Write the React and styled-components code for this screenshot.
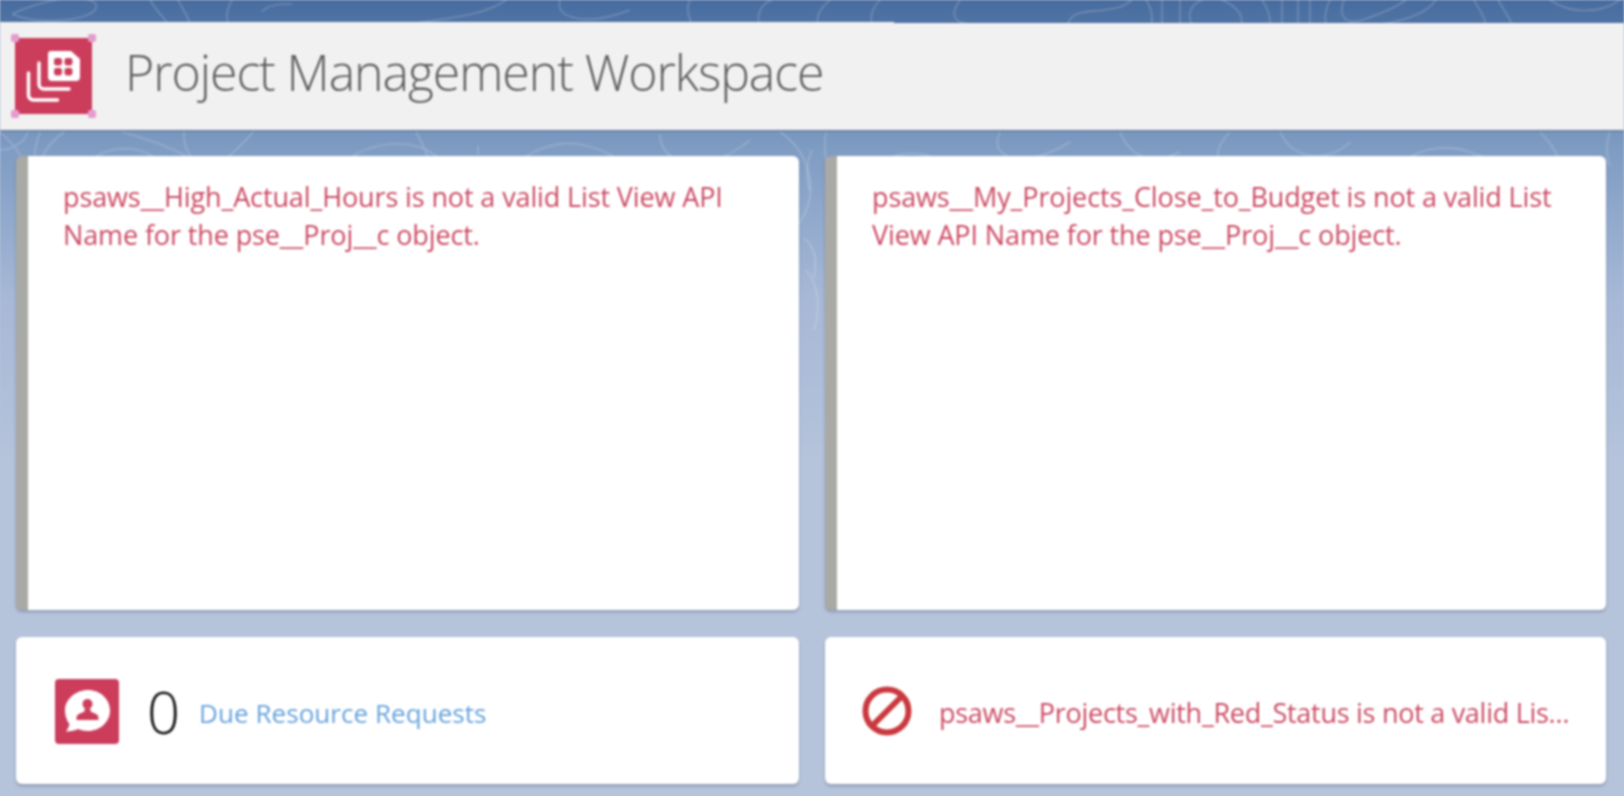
import React from "react";
import styled, { createGlobalStyle } from "styled-components";

const Global = createGlobalStyle`
  html, body { margin: 0; padding: 0; height: 100%; overflow: hidden; }
  body { font-family: "Open Sans", "Noto Sans", sans-serif; background: #b5c3db; }
`;

const Page = styled.div`
  position: relative;
  width: 1624px;
  height: 796px;
  overflow: hidden;
  filter: blur(0.9px);
  background: linear-gradient(180deg, #476c9f 0px, #7f9cc3 150px, #a7b9d7 300px, #b5c3db 460px, #b5c3db 796px);
`;

const Contours = styled.svg`
  position: absolute;
  left: 0;
  top: 0;
  width: 1624px;
  height: 360px;
  fill: none;
  stroke: rgba(255, 255, 255, 0.2);
  stroke-width: 1.6;
`;

const Content = styled.div`
  position: relative;
  display: flex;
  flex-direction: column;
  padding-top: 22px;
`;

const Header = styled.header`
  height: 107px;
  margin-top: 1px;
  background: #f1f1f1;
  box-shadow: 0 1px 2px rgba(60, 70, 90, 0.45);
`;

const HeaderInner = styled.div`
  width: 894px;
  height: 108px;
  margin-top: -1px;
  padding-left: 15px;
  box-sizing: border-box;
  display: flex;
  align-items: center;
  gap: 33px;
  background: #f1f1f1;
`;

const LogoBox = styled.div`
  position: relative;
  width: 77px;
  height: 76px;
  border-radius: 5px;
  background: #cc3d5c;
`;

const Handle = styled.span`
  position: absolute;
  width: 8px;
  height: 8px;
  border-radius: 2px;
  background: #e59cce;
  ${(p) => (p.$top ? "top: -4px;" : "bottom: -4px;")}
  ${(p) => (p.$left ? "left: -4px;" : "right: -4px;")}
`;

const Glyph = styled.svg`
  position: relative;
  display: block;
`;

const Title = styled.h1`
  margin: 0 0 8px;
  font-size: 50px;
  font-weight: 300;
  line-height: 1;
  letter-spacing: -1.08px;
  color: #5e5e5e;
`;

const Grid = styled.main`
  display: grid;
  grid-template-columns: 783px 781px;
  grid-template-rows: 454px 147px;
  column-gap: 26px;
  row-gap: 27px;
  padding: 26px 18px 0 16px;
`;

const Card = styled.section`
  box-sizing: border-box;
  background: #fff;
  border-radius: 6px;
  box-shadow: 0 2px 3px rgba(70, 80, 100, 0.35);
  overflow: hidden;
`;

const ListCard = styled(Card)`
  border-left: 12px solid #a9a9a6;
  padding: 22px 30px 0 35px;
`;

const MetricCard = styled(Card)`
  display: flex;
  align-items: center;
  padding-left: ${(p) => p.$pad}px;
  padding-right: 36px;
`;

const ErrorText = styled.p`
  margin: 0;
  font-size: 27px;
  line-height: 38px;
  letter-spacing: -0.12px;
  color: #cc4a63;
`;

const TileIcon = styled.div`
  flex: none;
  width: 64px;
  height: 65px;
  margin-top: 1px;
  border-radius: 4px;
  background: #cc3d5c;
  display: flex;
  align-items: center;
  justify-content: center;
`;

const Count = styled.span`
  margin: 3px 0 0 28px;
  font-size: 58px;
  font-weight: 300;
  line-height: 1;
  color: #111;
`;

const MetricLink = styled.a`
  margin: 4px 0 0 19px;
  font-size: 26px;
  letter-spacing: 0.05px;
  color: #67a3dc;
`;

const Truncated = styled(ErrorText)`
  margin: 4px 0 0 27px;
  min-width: 0;
  flex: 1;
  letter-spacing: -0.28px;
  white-space: nowrap;
  overflow: hidden;
  text-overflow: ellipsis;
`;

const BlockIcon = styled.svg`
  flex: none;
  width: 50px;
  height: 50px;
`;

const WorkspaceGlyph = () => (
  <Glyph width="77" height="76" viewBox="0 0 77 76" fill="none">
    <path d="M13.5 35v22a5 5 0 0 0 5 5h24" stroke="#fff" strokeWidth="3.4" strokeLinecap="round" />
    <path d="M24 25v21a5 5 0 0 0 5 5h25" stroke="#fff" strokeWidth="3.4" strokeLinecap="round" />
    <path d="M36 13h20l9 8v18a4 4 0 0 1-4 4H37a4 4 0 0 1-4-4V16a3 3 0 0 1 3-3z" fill="#fff" />
    <g fill="#cc3d5c">
      <rect x="39" y="20" width="8" height="7.5" rx="2.4" />
      <rect x="49.5" y="20" width="8" height="7.5" rx="2.4" />
      <rect x="39" y="30" width="8" height="7.5" rx="2.4" />
      <rect x="49.5" y="30" width="8" height="7.5" rx="2.4" />
    </g>
  </Glyph>
);

const RequestGlyph = () => (
  <svg width="46" height="44" viewBox="0 0 46 44">
    <path d="M24 1c12 0 22 9 22 20.500S36 42 24 42c-4 0-7-.8-10-2-3 1.600-7 2.400-12 2.400 1.600-2 3-4.400 3.400-7.400C2.800 31.600 1 27 1 21.500 1 10 12 1 24 1z" fill="#fff" />
    <circle cx="23.500" cy="15" r="5" fill="#cc3d5c" />
    <path d="M20.500 19.500h6v3l5.500 2.500c2 1 2.500 2 2.500 6h-22c0-4 .5-5 2.500-6l5.500-2.500z" fill="#cc3d5c" />
  </svg>
);

export default function App() {
  return (
    <Page>
      <Global />
      <Contours viewBox="0 0 1624 360">
        <path d="M12 14C60 -8 100 -4 96 8S40 26 12 14M150 0c6 10 14 18 18 24M178 0c5 10 10 16 12 24M232 0c-5 8-6 16-4 24M262 12c6-8 20-8 30-8M410 24c30-6 70-6 96-24M560 0c-6 20 30 26 70 10M690 0c-4 8-2 16 2 24M760 24c-4-8 0-20 12-24M830 0c-10 8-14 16-12 24M880 0c-8 8-10 16-8 24M960 0c-14 20 0 24 14 24" />
        <path d="M1068 24c4-14 20-12 36-14s20-4 28-10M1146 0c6 8 6 16 6 24M1162 0v24M1180 0v24M1192 24c-6-10 0-20 10-24M1222 0c18 8 20 16 20 24M1262 0c6 8 8 16 8 24M1282 0v24M1298 0v24M1310 24V0M1326 24c-2-8 0-16 4-24M1344 0c-6 14 0 26 18 20s36-14 44-20M1436 0c-10 14-34 22-58 24M1474 0c6 10 10 16 12 24M1498 0c6 10 10 16 14 24M1550 0c20 14 50 14 70 0" />
        <path d="M0 132c14 12 22 22 24 34M0 150c10 0 24-6 28-18M40 132c-4 10-6 20-6 34M64 132c-16 12-22 22-24 34M84 166c20-22 60-24 80 0M122 132c30 8 60 20 82 34M184 132c-2 34 30 40 52 18s14-16 18-18M244 166c20-10 44-10 62 0M326 166c10-12 30-10 36-2M346 160c30-20 64-20 84-8s14 10 20 14M416 132c6 10 10 20 16 34M478 146v8M520 160c30-20 60-24 100 0M660 134c0 34 50 40 90 6M780 132c30 20 40 60 20 90-8 10-14 14-24 12" />
        <path d="M804 238c10 8 14 20 10 40M806 270c14 16 14 40 8 60M812 150c-6 12-6 30-2 40M826 132c-2 14-2 24 2 34M880 166c10-12 30-16 50-10s20 10 20 10M1000 132c-14 30 30 36 70 10M1120 132c10 24 30 34 60 20M1220 166c-6-12 0-24 10-34M1280 132c14 30 50 30 70 10M1400 166c10-14 40-24 70-14s30 14 40 14M1540 132c10 10 20 24 20 34M1610 132c-4 10-4 24 0 34" />
      </Contours>
      <Content>
        <Header>
          <HeaderInner>
            <LogoBox>
              <Handle $top $left />
              <Handle $top />
              <Handle $left />
              <Handle />
              <WorkspaceGlyph />
            </LogoBox>
            <Title>Project Management Workspace</Title>
          </HeaderInner>
        </Header>
        <Grid>
          <ListCard>
            <ErrorText>psaws__High_Actual_Hours is not a valid List View API Name for the pse__Proj__c object.</ErrorText>
          </ListCard>
          <ListCard>
            <ErrorText>psaws__My_Projects_Close_to_Budget is not a valid List View API Name for the pse__Proj__c object.</ErrorText>
          </ListCard>
          <MetricCard $pad={39}>
            <TileIcon>
              <RequestGlyph />
            </TileIcon>
            <Count>0</Count>
            <MetricLink>Due Resource Requests</MetricLink>
          </MetricCard>
          <MetricCard $pad={37}>
            <BlockIcon viewBox="0 0 50 50" fill="none" stroke="#c9393f" strokeWidth="6">
              <circle cx="25" cy="25" r="21.5" />
              <path d="M10 40L40 10" />
            </BlockIcon>
            <Truncated>psaws__Projects_with_Red_Status is not a valid List View API Name for the pse__Proj__c object.</Truncated>
          </MetricCard>
        </Grid>
      </Content>
    </Page>
  );
}
